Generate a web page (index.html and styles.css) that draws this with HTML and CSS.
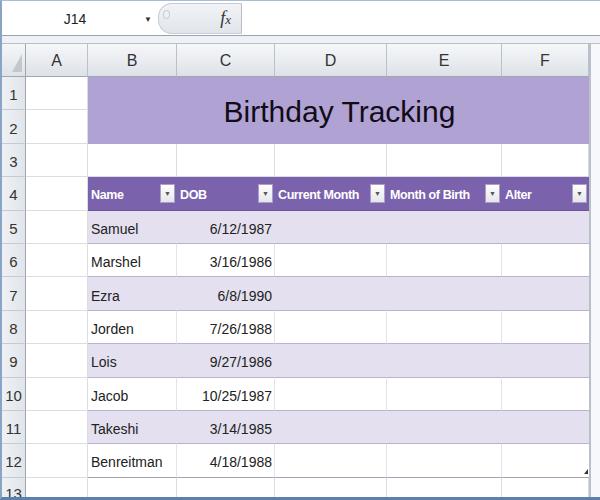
FILE: index.html
```html
<!DOCTYPE html>
<html lang="en">
<head>
    <meta charset="UTF-8">
    <title>Birthday Tracking</title>
    <link rel="stylesheet" href="styles.css">
</head>
<body>
    <div class="window">
        <div class="formula-bar">
            <div class="name-box">
                <span class="cell-ref">J14</span>
                <span class="drop">&#9660;</span>
            </div>
            <div class="fx-box">
                <span class="grip"></span>
                <span class="fx"><i>f</i><i class="x">x</i></span>
            </div>
            <div class="formula-input"></div>
        </div>
        <div class="bar-gap"></div>

        <div class="sheet-wrap">
            <div class="sheet">
                <!-- column headers -->
                <div class="corner">
                    <svg width="10" height="18" viewBox="0 0 10 18"><polygon points="10,0 10,18 0,18" fill="#c3c8cf"/></svg>
                </div>
                <div class="col-head">A</div>
                <div class="col-head">B</div>
                <div class="col-head">C</div>
                <div class="col-head">D</div>
                <div class="col-head">E</div>
                <div class="col-head">F</div>

                <!-- rows 1-2: title -->
                <div class="row-head">1</div>
                <div class="cell"></div>
                <div class="title">Birthday Tracking</div>
                <div class="row-head">2</div>
                <div class="cell"></div>

                <!-- row 3 -->
                <div class="row-head">3</div>
                <div class="cell"></div>
                <div class="cell"></div>
                <div class="cell"></div>
                <div class="cell"></div>
                <div class="cell"></div>
                <div class="cell"></div>

                <!-- row 4: table header -->
                <div class="row-head">4</div>
                <div class="cell"></div>
                <div class="th">Name <span class="filter">&#9660;</span></div>
                <div class="th">DOB <span class="filter">&#9660;</span></div>
                <div class="th">Current Month <span class="filter">&#9660;</span></div>
                <div class="th">Month of Birth <span class="filter">&#9660;</span></div>
                <div class="th">Alter <span class="filter">&#9660;</span></div>

                <div id="dataRows" class="rows"></div>

                <!-- row 13 -->
                <div class="row-head last">13</div>
                <div class="cell"></div>
                <div class="cell"></div>
                <div class="cell"></div>
                <div class="cell"></div>
                <div class="cell"></div>
                <div class="cell"></div>
            </div>
            <div class="edge"></div>
        </div>
    </div>

    <script>
        // datos de la tabla
        const people = [
            { name: "Samuel", dob: "6/12/1987" },
            { name: "Marshel", dob: "3/16/1986" },
            { name: "Ezra", dob: "6/8/1990" },
            { name: "Jorden", dob: "7/26/1988" },
            { name: "Lois", dob: "9/27/1986" },
            { name: "Jacob", dob: "10/25/1987" },
            { name: "Takeshi", dob: "3/14/1985" },
            { name: "Benreitman", dob: "4/18/1988" }
        ];

        const dataRows = document.getElementById('dataRows');

        dataRows.innerHTML = people.map((p, i) => {
            const band = i % 2 === 0 ? 'band' : '';
            const lastRow = i === people.length - 1 ? 'bottom' : '';
            return `
                <div class="row-head">${i + 5}</div>
                <div class="cell"></div>
                <div class="td ${band} ${lastRow}">${p.name}</div>
                <div class="td num ${band} ${lastRow}">${p.dob}</div>
                <div class="td ${band} ${lastRow}"></div>
                <div class="td ${band} ${lastRow}"></div>
                <div class="td end ${band} ${lastRow}">${lastRow ? '<span class="resize"></span>' : ''}</div>
            `;
        }).join('');
    </script>
</body>
</html>
```

FILE: styles.css
```css
* {
    margin: 0;
    padding: 0;
    box-sizing: border-box;
}

body {
    font-family: "Liberation Sans", Arial, sans-serif;
    background: #fff;
    color: #222;
}

.window {
    width: 600px;
    height: 500px;
    overflow: hidden;
    background: #fff;
    border-left: 2px solid #8aa4c6;
    border-top: 1px solid #a9bcd6;
    border-bottom: 3px solid #5d7fad;
}

/* formula bar */
.formula-bar {
    display: flex;
    height: 35px;
    border-bottom: 1px solid #9aa3ae;
}

.name-box {
    width: 154px;
    display: flex;
    align-items: center;
    padding-top: 2px;
}

.cell-ref {
    flex: 1;
    text-align: center;
    font-size: 14px;
    padding-left: 4px;
}

.drop {
    font-size: 8px;
    color: #333;
    margin-right: 4px;
}

.fx-box {
    width: 84px;
    margin: 2px 0 1px 2px;
    display: flex;
    align-items: center;
    justify-content: space-between;
    background: linear-gradient(#f1f3f6, #e1e5ea);
    border: 1px solid #c6ccd4;
    border-right: 1px solid #b7bec7;
    border-radius: 14px 0 0 14px;
    padding: 0 10px 0 4px;
}

.grip {
    width: 7px;
    height: 9px;
    border-radius: 50%;
    border: 1px solid #c9ced6;
    background: #eceff3;
    margin-bottom: 8px;
}

.fx {
    font-family: "Liberation Serif", serif;
    font-size: 18px;
    color: #333;
}

.fx .x {
    font-size: 13px;
}

.formula-input {
    flex: 1;
}

.bar-gap {
    height: 8px;
    background: #eef1f5;
    border-bottom: 1px solid #b9c0c9;
}

/* sheet */
.sheet-wrap {
    display: flex;
}

.sheet {
    display: grid;
    grid-template-columns: 24px 62px 89px 98px 112px 115px 87px;
    grid-template-rows: 33px;
    grid-auto-rows: 33.4px;
}

.rows {
    display: contents;
}

.edge {
    flex: 1;
    background: #f6f8fb;
    border-left: 2px solid #b9c0c9;
}

.corner {
    background: linear-gradient(#f4f6f8, #dfe3e8);
    border-right: 1px solid #9ea7b3;
    border-bottom: 1px solid #9ea7b3;
    display: flex;
    align-items: flex-end;
    justify-content: flex-end;
    padding: 0 3px 4px 0;
}

.col-head {
    background: linear-gradient(#f6f7f9, #dde2e8);
    border-right: 1px solid #bac1ca;
    border-bottom: 1px solid #9ea7b3;
    display: flex;
    align-items: center;
    justify-content: center;
    font-size: 16px;
    color: #333;
    padding-top: 2px;
}

.row-head {
    background: linear-gradient(90deg, #eef1f4, #e1e5ea);
    border-right: 1px solid #9ea7b3;
    border-bottom: 1px solid #c5cbd3;
    display: flex;
    align-items: center;
    justify-content: center;
    font-size: 15px;
    color: #333;
    padding-top: 3px;
}

.row-head.last {
    align-items: flex-start;
    padding-top: 7px;
}

.cell {
    border-right: 1px solid #dadde1;
    border-bottom: 1px solid #dadde1;
}

.title {
    grid-column: span 5;
    grid-row: span 2;
    background: #b0a2d2;
    display: flex;
    align-items: center;
    justify-content: center;
    font-size: 30px;
    color: #110c18;
    padding: 4px 0 0 2px;
}

.th {
    background: #7b62ac;
    color: #fff;
    font-weight: bold;
    font-size: 12.5px;
    letter-spacing: -0.4px;
    display: flex;
    align-items: center;
    justify-content: space-between;
    padding: 3px 2px 0 3px;
    border-bottom: 1px solid #6a5599;
    white-space: nowrap;
}

.filter {
    width: 15px;
    height: 19px;
    background: linear-gradient(#fff, #e6e6ea);
    border: 1px solid #a99fc4;
    color: #555;
    font-size: 7px;
    font-weight: normal;
    letter-spacing: 0;
    display: flex;
    align-items: center;
    justify-content: center;
    margin-top: -2px;
}

.td {
    display: flex;
    align-items: center;
    padding: 4px 3px 0;
    font-size: 14px;
    color: #222;
    white-space: nowrap;
    border-right: 1px solid #e4e2ea;
    border-bottom: 1px solid #b9b3cc;
}

.td.band {
    background: #e4e0f0;
}

.td.num {
    justify-content: flex-end;
    padding-right: 2px;
}

.td.end {
    position: relative;
    border-right: none;
}

.td.bottom {
    border-bottom: 1px solid #a6a3b4;
}

.resize {
    position: absolute;
    right: 1px;
    bottom: 3px;
    width: 0;
    height: 0;
    border-left: 4px solid transparent;
    border-bottom: 5px solid #333;
}
```
